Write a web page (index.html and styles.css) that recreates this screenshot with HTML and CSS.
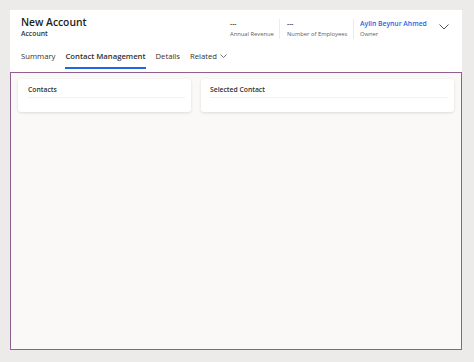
FILE: index.html
```html
<!DOCTYPE html>
<html>
<head>
    <title>New Account</title>
    <link rel="stylesheet" href="styles.css">
</head>
<body>
    <div class="page">
        <div class="header">
            <div class="header-top">
                <div class="title-block">
                    <h1 class="title">New Account</h1>
                    <div class="subtitle">Account</div>
                </div>
                <div class="fields">
                    <div class="field field-revenue">
                        <div class="field-value">---</div>
                        <div class="field-label">Annual Revenue</div>
                    </div>
                    <div class="field field-employees">
                        <div class="field-value">---</div>
                        <div class="field-label">Number of Employees</div>
                    </div>
                    <div class="field field-owner">
                        <div class="field-value owner-name">Aylin Beynur Ahmed</div>
                        <div class="field-label">Owner</div>
                    </div>
                    <svg class="expand" width="10" height="6" viewBox="0 0 10 6">
                        <path d="M0.5 0.5 L5 5 L9.5 0.5" fill="none" stroke="#555" stroke-width="1"/>
                    </svg>
                </div>
            </div>
            <div class="tabs">
                <div class="tab">Summary</div>
                <div class="tab active">Contact Management</div>
                <div class="tab">Details</div>
                <div class="tab">Related
                    <svg width="7" height="4" viewBox="0 0 7 4">
                        <path d="M0.5 0.5 L3.5 3.5 L6.5 0.5" fill="none" stroke="#666" stroke-width="0.9"/>
                    </svg>
                </div>
            </div>
        </div>

        <div class="content">
            <div class="card card-contacts">
                <div class="card-title">Contacts</div>
            </div>
            <div class="card card-selected">
                <div class="card-title">Selected Contact</div>
            </div>
        </div>
    </div>
</body>
</html>
```

FILE: styles.css
```css
body {
    margin: 0;
    font-family: "Open Sans", "Noto Sans", sans-serif;
    background-color: #edebe9;
    color: #323130;
}

.page {
    width: 474px;
    box-sizing: border-box;
    padding: 10px 12px 12px 10px;
}

.header {
    background-color: #fff;
    height: 62px;
    box-sizing: border-box;
    padding-left: 11px;
}

.header-top {
    display: flex;
    justify-content: space-between;
    height: 40px;
}

.title-block {
    padding-top: 6px;
}

.title {
    margin: 0;
    font-size: 10.3px;
    font-weight: 600;
    line-height: 13px;
    color: #201f1e;
}

.subtitle {
    font-size: 6.8px;
    font-weight: 600;
    line-height: 10px;
    color: #323130;
}

.fields {
    display: flex;
    align-items: flex-start;
    padding-top: 9px;
}

.field {
    box-sizing: border-box;
    height: 20px;
    border-right: 1px solid #edebe9;
}

.field-revenue {
    width: 50px;
}

.field-employees {
    width: 74px;
    padding-left: 7px;
}

.field-owner {
    width: 79px;
    padding-left: 6px;
    border-right: none;
}

.field-value {
    font-size: 6.8px;
    line-height: 10px;
    font-weight: 600;
    color: #323130;
    white-space: nowrap;
}

.field-label {
    font-size: 5.8px;
    line-height: 10px;
    color: #605e5c;
    white-space: nowrap;
}

.owner-name {
    color: #2266e3;
}

.expand {
    margin: 5px 13px 0 6px;
}

.tabs {
    display: flex;
    gap: 10px;
}

.tab {
    font-size: 7.7px;
    line-height: 12px;
    height: 19px;
    box-sizing: border-box;
    color: #323130;
    white-space: nowrap;
}

.tab.active {
    font-weight: 600;
    border-bottom: 2px solid #2266e3;
}

.tab svg {
    margin-left: 1px;
    vertical-align: 1px;
}

.content {
    height: 278px;
    box-sizing: border-box;
    border: 1px solid #8e5f8f;
    background-color: #faf9f8;
    display: flex;
    align-items: flex-start;
    gap: 10px;
    padding: 6px 7px 0 7px;
}

.card {
    background-color: #fff;
    height: 33px;
    box-sizing: border-box;
    border-radius: 3px;
    box-shadow: 0 1px 3px rgba(0, 0, 0, 0.12);
    padding: 6px 6px 0 10px;
}

.card-contacts {
    width: 173px;
}

.card-selected {
    flex: 1;
    padding-left: 9px;
}

.card-title {
    font-size: 6.8px;
    font-weight: 600;
    line-height: 10px;
    padding-bottom: 2px;
    border-bottom: 1px solid #f3f2f1;
    color: #323130;
}
```
